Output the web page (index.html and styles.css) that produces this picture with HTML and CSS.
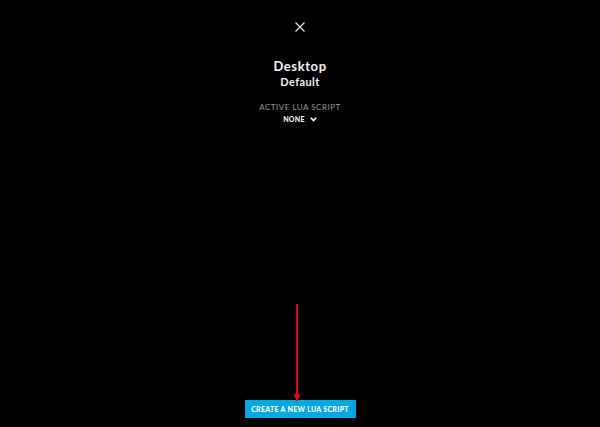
FILE: index.html
```html
<!DOCTYPE html>
<html lang="en">
<head>
  <meta charset="UTF-8" />
  <meta name="viewport" content="width=device-width, initial-scale=1.0"/>
  <title>Profile</title>
  <link rel="stylesheet" href="styles.css">
</head>
<body>
  <div class="screen">
    <button class="close" aria-label="Close">
      <svg width="10" height="10" viewBox="0 0 10 10">
        <path d="M0.5 0.5 L9.5 9.5 M9.5 0.5 L0.5 9.5" stroke="#e8e8e8" stroke-width="1.2" fill="none"/>
      </svg>
    </button>

    <div class="profile">
      <h1 class="profile-name">Desktop</h1>
      <h2 class="profile-sub">Default</h2>
    </div>

    <div class="script-select">
      <p class="script-label">ACTIVE LUA SCRIPT</p>
      <p class="script-value">NONE
        <svg width="7" height="5" viewBox="0 0 7 5">
          <path d="M0.8 0.8 L3.5 3.6 L6.2 0.8" stroke="#fff" stroke-width="1.6" fill="none"/>
        </svg>
      </p>
    </div>

    <div class="footer">
      <button class="create-btn">CREATE A NEW LUA SCRIPT</button>
    </div>

    <svg class="arrow" width="10" height="99" viewBox="0 0 10 99">
      <line x1="5" y1="0" x2="5" y2="92" stroke="#e30613" stroke-width="2"/>
      <path d="M1.5 90 L8.5 90 L5 98 Z" fill="#e30613"/>
    </svg>
  </div>
</body>
</html>
```

FILE: styles.css
```css
:root {
  --bg: #000000;
  --white: #f2f2f2;
  --gray: #9a9a9a;
  --blue: #00a8e1;
}

body {
  margin: 0;
  padding: 0;
  background-color: var(--bg);
  font-family: 'Lato', 'Open Sans', sans-serif;
  color: var(--white);
}

.screen {
  position: relative;
  display: flex;
  flex-direction: column;
  align-items: center;
  height: 427px;
  overflow: hidden;
}

.close {
  background: none;
  border: none;
  padding: 0;
  margin-top: 22px;
  width: 10px;
  height: 10px;
  display: flex;
  cursor: pointer;
}

.profile {
  margin-top: 26px;
  text-align: center;
}

.profile-name {
  margin: 0;
  font-size: 13px;
  font-weight: 700;
  line-height: 16px;
  letter-spacing: 0.6px;
}

.profile-sub {
  margin: 1px 0 0;
  font-size: 11px;
  font-weight: 700;
  line-height: 14px;
  letter-spacing: 0.4px;
}

.script-select {
  margin-top: 13px;
  text-align: center;
}

.script-label {
  margin: 0;
  font-size: 8px;
  line-height: 10px;
  letter-spacing: 0.5px;
  color: var(--gray);
}

.script-value {
  margin: 2px 0 0;
  font-size: 7px;
  font-weight: 900;
  line-height: 10px;
  letter-spacing: 0.3px;
  display: flex;
  align-items: center;
  justify-content: center;
  gap: 5px;
}

.footer {
  margin-top: auto;
  padding-bottom: 9px;
}

.create-btn {
  background-color: var(--blue);
  border: none;
  color: #ffffff;
  font-family: 'Lato', sans-serif;
  font-size: 7px;
  font-weight: 900;
  letter-spacing: 0.3px;
  width: 111px;
  height: 18px;
  padding: 0;
  cursor: pointer;
}

.arrow {
  position: absolute;
  left: 292px;
  top: 304px;
}
```
